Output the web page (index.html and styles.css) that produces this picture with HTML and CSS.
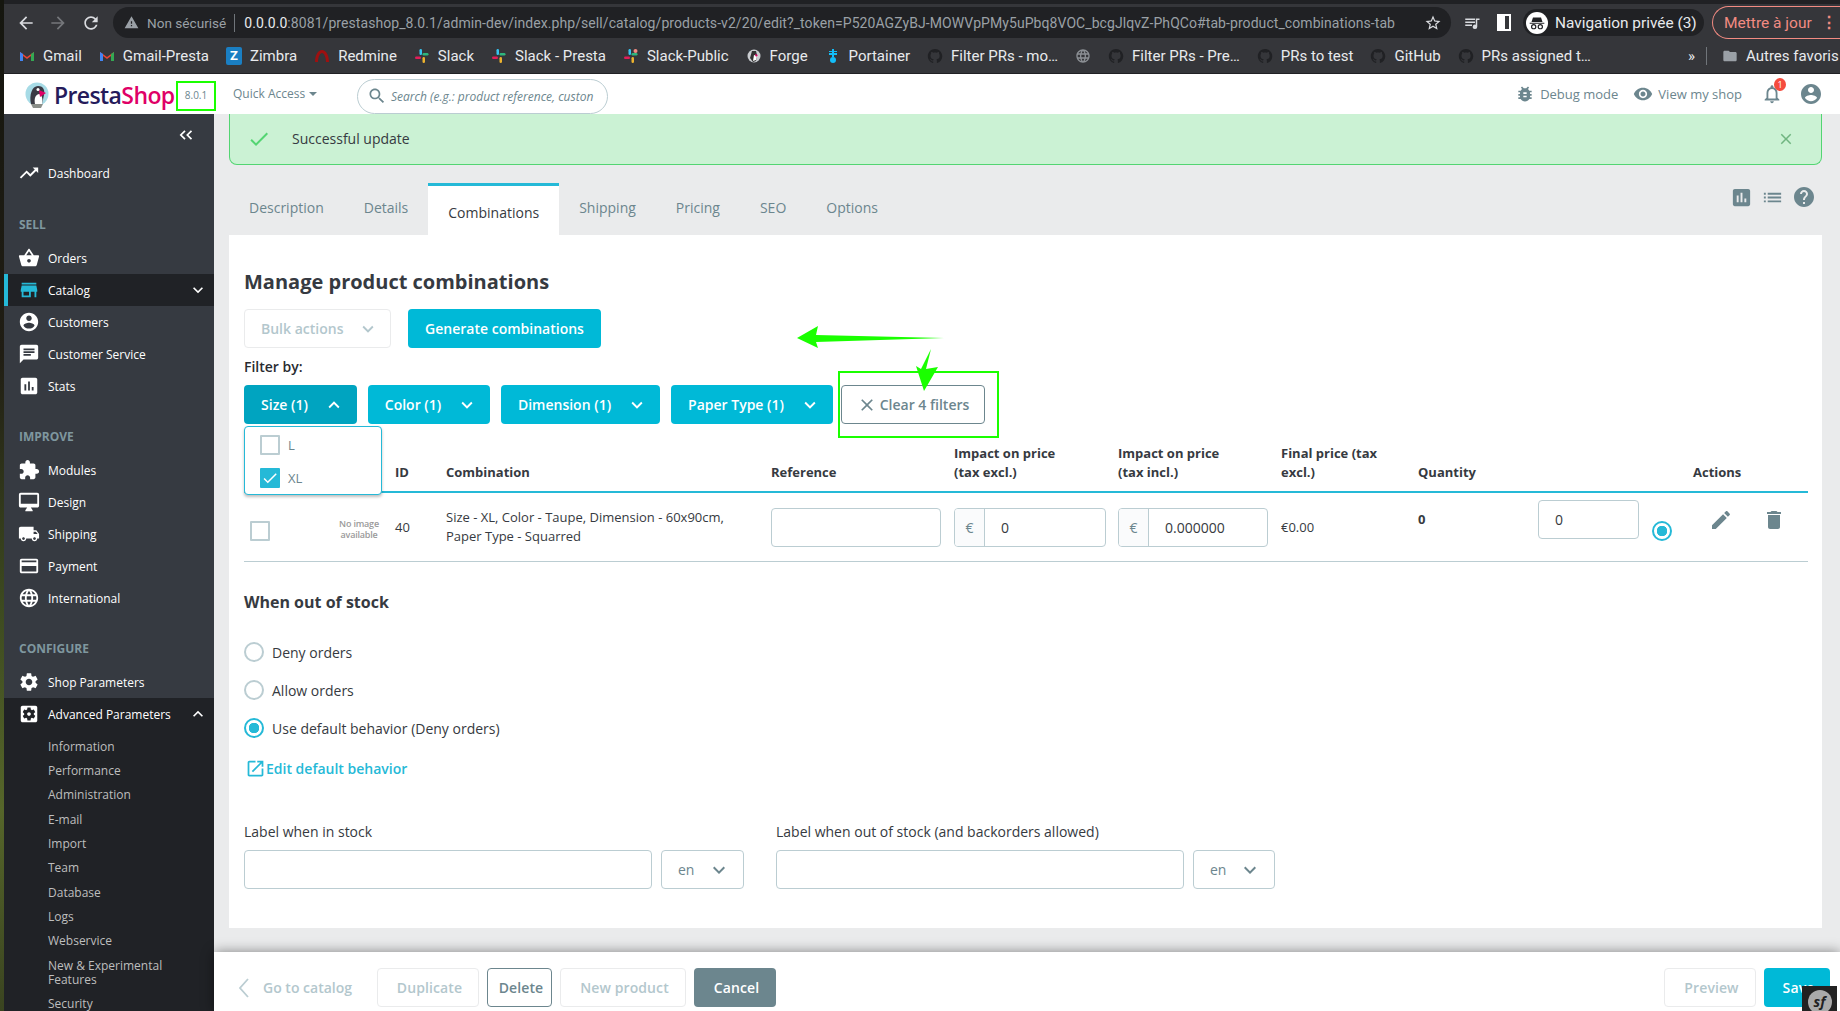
FILE: index.html
```html
<!DOCTYPE html>
<html lang="en">
<head>
<meta charset="utf-8">
<title>PrestaShop</title>
<link rel="stylesheet" href="styles.css">
</head>
<body>
<svg class="sprite" width="0" height="0">
<defs>
<symbol id="i-trend" viewBox="0 0 24 24"><path d="M16 6l2.29 2.29-4.88 4.88-4-4L2 16.59 3.41 18l6-6 4 4 6.3-6.29L22 12V6z"/></symbol>
<symbol id="i-basket" viewBox="0 0 24 24"><path d="M17.21 9l-4.38-6.56c-.19-.28-.51-.42-.83-.42-.32 0-.64.14-.83.43L6.79 9H2c-.55 0-1 .45-1 1 0 .09.01.18.04.27l2.54 9.27c.23.84 1 1.46 1.92 1.46h13c.92 0 1.69-.62 1.93-1.46l2.54-9.27L23 10c0-.55-.45-1-1-1h-4.79zM9 9l3-4.4L15 9H9zm3 8c-1.1 0-2-.9-2-2s.9-2 2-2 2 .9 2 2-.9 2-2 2z"/></symbol>
<symbol id="i-store" viewBox="0 0 24 24"><path d="M20 4H4v2h16V4zm1 10v-2l-1-5H4l-1 5v2h1v6h10v-6h4v6h2v-6h1zm-9 4H6v-4h6v4z"/></symbol>
<symbol id="i-account" viewBox="0 0 24 24"><path d="M12 2C6.48 2 2 6.48 2 12s4.48 10 10 10 10-4.48 10-10S17.52 2 12 2zm0 3c1.66 0 3 1.34 3 3s-1.34 3-3 3-3-1.34-3-3 1.34-3 3-3zm0 14.2c-2.5 0-4.71-1.28-6-3.22.03-1.99 4-3.08 6-3.08 1.99 0 5.97 1.09 6 3.08-1.29 1.94-3.5 3.22-6 3.22z"/></symbol>
<symbol id="i-chat" viewBox="0 0 24 24"><path d="M20 2H4c-1.1 0-1.99.9-1.99 2L2 22l4-4h14c1.1 0 2-.9 2-2V4c0-1.1-.9-2-2-2zM6 9h12v2H6V9zm8 5H6v-2h8v2zm4-6H6V6h12v2z"/></symbol>
<symbol id="i-stats" viewBox="0 0 24 24"><path d="M19 3H5c-1.1 0-2 .9-2 2v14c0 1.1.9 2 2 2h14c1.1 0 2-.9 2-2V5c0-1.1-.9-2-2-2zM9 17H7v-7h2v7zm4 0h-2V7h2v10zm4 0h-2v-4h2v4z"/></symbol>
<symbol id="i-ext" viewBox="0 0 24 24"><path d="M20.5 11H19V7c0-1.1-.9-2-2-2h-4V3.5C13 2.12 11.88 1 10.5 1S8 2.12 8 3.5V5H4c-1.1 0-1.99.9-1.99 2v3.8H3.5c1.49 0 2.7 1.21 2.7 2.7s-1.21 2.7-2.7 2.7H2V20c0 1.1.9 2 2 2h3.8v-1.5c0-1.49 1.21-2.7 2.7-2.7 1.49 0 2.7 1.21 2.7 2.7V22H17c1.1 0 2-.9 2-2v-4h1.5c1.38 0 2.5-1.12 2.5-2.5S21.88 11 20.5 11z"/></symbol>
<symbol id="i-desktop" viewBox="0 0 24 24"><path d="M21 2H3c-1.1 0-2 .9-2 2v12c0 1.1.9 2 2 2h7l-2 3v1h8v-1l-2-3h7c1.1 0 2-.9 2-2V4c0-1.1-.9-2-2-2zm0 12H3V4h18v10z"/></symbol>
<symbol id="i-truck" viewBox="0 0 24 24"><path d="M20 8h-3V4H3c-1.1 0-2 .9-2 2v11h2c0 1.66 1.34 3 3 3s3-1.34 3-3h6c0 1.66 1.34 3 3 3s3-1.34 3-3h2v-5l-3-4zM6 18.5c-.83 0-1.5-.67-1.5-1.5s.67-1.5 1.5-1.5 1.5.67 1.5 1.5-.67 1.5-1.5 1.5zm13.5-9l1.96 2.5H17V9.5h2.5zm-1.5 9c-.83 0-1.5-.67-1.5-1.5s.67-1.5 1.5-1.5 1.5.67 1.5 1.5-.67 1.5-1.5 1.5z"/></symbol>
<symbol id="i-card" viewBox="0 0 24 24"><path d="M20 4H4c-1.11 0-1.99.89-1.99 2L2 18c0 1.11.89 2 2 2h16c1.11 0 2-.89 2-2V6c0-1.11-.89-2-2-2zm0 14H4v-6h16v6zm0-10H4V6h16v2z"/></symbol>
<symbol id="i-globe" viewBox="0 0 24 24"><path d="M11.99 2C6.47 2 2 6.48 2 12s4.47 10 9.99 10C17.52 22 22 17.52 22 12S17.52 2 11.99 2zm6.93 6h-2.95c-.32-1.25-.78-2.45-1.38-3.56 1.84.63 3.37 1.91 4.33 3.56zM12 4.04c.83 1.2 1.48 2.53 1.91 3.96h-3.82c.43-1.43 1.08-2.76 1.91-3.96zM4.26 14C4.1 13.36 4 12.69 4 12s.1-1.36.26-2h3.38c-.08.66-.14 1.32-.14 2 0 .68.06 1.34.14 2H4.26zm.82 2h2.95c.32 1.25.78 2.45 1.38 3.56-1.84-.63-3.37-1.9-4.33-3.56zm2.95-8H5.08c.96-1.66 2.49-2.93 4.33-3.56C8.81 5.55 8.35 6.75 8.03 8zM12 19.96c-.83-1.2-1.48-2.53-1.91-3.96h3.82c-.43 1.43-1.08 2.76-1.91 3.96zM14.34 14H9.66c-.09-.66-.16-1.32-.16-2 0-.68.07-1.35.16-2h4.68c.09.65.16 1.32.16 2 0 .68-.07 1.34-.16 2zm.25 5.56c.6-1.11 1.06-2.31 1.38-3.56h2.95c-.96 1.65-2.49 2.93-4.33 3.56zM16.36 14c.08-.66.14-1.32.14-2 0-.68-.06-1.34-.14-2h3.38c.16.64.26 1.31.26 2s-.1 1.36-.26 2h-3.38z"/></symbol>
<symbol id="i-gear" viewBox="0 0 24 24"><path d="M19.14 12.94c.04-.3.06-.61.06-.94 0-.32-.02-.64-.07-.94l2.03-1.58c.18-.14.23-.41.12-.61l-1.92-3.32c-.12-.22-.37-.29-.59-.22l-2.39.96c-.5-.38-1.03-.7-1.62-.94l-.36-2.54c-.04-.24-.24-.41-.48-.41h-3.84c-.24 0-.43.17-.47.41l-.36 2.54c-.59.24-1.13.57-1.62.94l-2.39-.96c-.22-.08-.47 0-.59.22L2.74 8.87c-.12.21-.08.47.12.61l2.03 1.58c-.05.3-.09.63-.09.94s.02.64.07.94l-2.03 1.58c-.18.14-.23.41-.12.61l1.92 3.32c.12.22.37.29.59.22l2.39-.96c.5.38 1.03.7 1.62.94l.36 2.54c.05.24.24.41.48.41h3.84c.24 0 .44-.17.47-.41l.36-2.54c.59-.24 1.13-.56 1.62-.94l2.39.96c.22.08.47 0 .59-.22l1.92-3.32c.12-.22.07-.47-.12-.61l-2.01-1.58zM12 15.6c-1.98 0-3.6-1.62-3.6-3.6s1.62-3.6 3.6-3.6 3.6 1.62 3.6 3.6-1.62 3.6-3.6 3.6z"/></symbol>
<symbol id="i-gearbox" viewBox="0 0 24 24"><path d="M12 10c-1.1 0-2 .9-2 2s.9 2 2 2 2-.9 2-2-.9-2-2-2zm7-7H5c-1.11 0-2 .9-2 2v14c0 1.1.89 2 2 2h14c1.11 0 2-.9 2-2V5c0-1.1-.89-2-2-2zm-1.75 9c0 .23-.02.46-.05.68l1.48 1.16c.13.11.17.3.08.45l-1.4 2.42c-.09.15-.27.21-.43.15l-1.74-.7c-.36.28-.76.51-1.18.69l-.26 1.85c-.03.17-.18.3-.35.3h-2.8c-.17 0-.32-.13-.35-.29l-.26-1.85c-.43-.18-.82-.41-1.18-.69l-1.74.7c-.16.06-.34 0-.43-.15l-1.4-2.42c-.09-.15-.05-.34.08-.45l1.48-1.16c-.03-.23-.05-.46-.05-.69 0-.23.02-.46.05-.68l-1.48-1.16c-.13-.11-.17-.3-.08-.45l1.4-2.42c.09-.15.27-.21.43-.15l1.74.7c.36-.28.76-.51 1.18-.69l.26-1.85c.03-.17.18-.3.35-.3h2.8c.17 0 .32.13.35.29l.26 1.85c.43.18.82.41 1.18.69l1.74-.7c.16-.06.34 0 .43.15l1.4 2.42c.09.15.05.34-.08.45l-1.48 1.16c.03.23.05.46.05.69z"/></symbol>
<symbol id="i-bug" viewBox="0 0 24 24"><path d="M20 8h-2.81c-.45-.78-1.07-1.45-1.82-1.96L17 4.41 15.59 3l-2.17 2.17C12.96 5.06 12.49 5 12 5c-.49 0-.96.06-1.41.17L8.41 3 7 4.41l1.62 1.63C7.88 6.55 7.26 7.22 6.81 8H4v2h2.09c-.05.33-.09.66-.09 1v1H4v2h2v1c0 .34.04.67.09 1H4v2h2.81c1.04 1.79 2.97 3 5.19 3s4.15-1.21 5.19-3H20v-2h-2.09c.05-.33.09-.66.09-1v-1h2v-2h-2v-1c0-.34-.04-.67-.09-1H20V8zm-6 8h-4v-2h4v2zm0-4h-4v-2h4v2z"/></symbol>
<symbol id="i-eye" viewBox="0 0 24 24"><path d="M12 4.5C7 4.5 2.73 7.61 1 12c1.73 4.39 6 7.5 11 7.5s9.27-3.11 11-7.5c-1.73-4.39-6-7.5-11-7.5zM12 17c-2.76 0-5-2.24-5-5s2.24-5 5-5 5 2.24 5 5-2.24 5-5 5zm0-8c-1.66 0-3 1.34-3 3s1.34 3 3 3 3-1.34 3-3-1.34-3-3-3z"/></symbol>
<symbol id="i-bell" viewBox="0 0 24 24"><path d="M12 22c1.1 0 2-.9 2-2h-4c0 1.1.9 2 2 2zm6-6v-5c0-3.07-1.63-5.64-4.5-6.32V4c0-.83-.67-1.5-1.5-1.5s-1.5.67-1.5 1.5v.68C7.64 5.36 6 7.92 6 11v5l-2 2v1h16v-1l-2-2zm-2 1H8v-6c0-2.48 1.51-4.5 4-4.5s4 2.02 4 4.5v6z"/></symbol>
<symbol id="i-search" viewBox="0 0 24 24"><path d="M15.5 14h-.79l-.28-.27C15.41 12.59 16 11.11 16 9.5 16 5.91 13.09 3 9.5 3S3 5.91 3 9.5 5.91 16 9.5 16c1.61 0 3.09-.59 4.23-1.57l.27.28v.79l5 4.99L20.49 19l-4.99-5zm-6 0C7.01 14 5 11.99 5 9.5S7.01 5 9.5 5 14 7.01 14 9.5 11.99 14 9.5 14z"/></symbol>
<symbol id="i-edit" viewBox="0 0 24 24"><path d="M3 17.25V21h3.75L17.81 9.94l-3.75-3.75L3 17.25zM20.71 7.04c.39-.39.39-1.02 0-1.41l-2.34-2.34c-.39-.39-1.02-.39-1.41 0l-1.83 1.83 3.75 3.75 1.83-1.83z"/></symbol>
<symbol id="i-trash" viewBox="0 0 24 24"><path d="M6 19c0 1.1.9 2 2 2h8c1.1 0 2-.9 2-2V7H6v12zM19 4h-3.5l-1-1h-5l-1 1H5v2h14V4z"/></symbol>
<symbol id="i-help" viewBox="0 0 24 24"><path d="M12 2C6.48 2 2 6.48 2 12s4.48 10 10 10 10-4.48 10-10S17.52 2 12 2zm1 17h-2v-2h2v2zm2.07-7.75l-.9.92C13.45 12.9 13 13.5 13 15h-2v-.5c0-1.1.45-2.1 1.17-2.83l1.24-1.26c.37-.36.59-.86.59-1.41 0-1.1-.9-2-2-2s-2 .9-2 2H8c0-2.21 1.79-4 4-4s4 1.79 4 4c0 .88-.36 1.68-.93 2.25z"/></symbol>
<symbol id="i-list" viewBox="0 0 24 24"><path d="M3 13h2v-2H3v2zm0 4h2v-2H3v2zm0-8h2V7H3v2zm4 4h14v-2H7v2zm0 4h14v-2H7v2zM7 7v2h14V7H7z"/></symbol>
<symbol id="i-open" viewBox="0 0 24 24"><path d="M19 19H5V5h7V3H5c-1.11 0-2 .9-2 2v14c0 1.1.89 2 2 2h14c1.1 0 2-.9 2-2v-7h-2v7zM14 3v2h3.59l-9.83 9.83 1.41 1.41L19 6.41V10h2V3h-7z"/></symbol>
<symbol id="i-close" viewBox="0 0 24 24"><path d="M19 6.41L17.59 5 12 10.59 6.41 5 5 6.41 10.59 12 5 17.59 6.41 19 12 13.41 17.59 19 19 17.59 13.41 12z"/></symbol>
<symbol id="i-check" viewBox="0 0 24 24"><path d="M9 16.17L4.83 12l-1.42 1.41L9 19 21 7l-1.41-1.41z"/></symbol>
<symbol id="i-down" viewBox="0 0 24 24"><path d="M7.41 8.59L12 13.17l4.59-4.58L18 10l-6 6-6-6z"/></symbol>
<symbol id="i-up" viewBox="0 0 24 24"><path d="M7.41 15.41L12 10.83l4.59 4.58L18 14l-6-6-6 6z"/></symbol>
<symbol id="i-hub" viewBox="0 0 24 24"><path d="M12 1.5C6 1.5 1.2 6.3 1.2 12.3c0 4.8 3.1 8.8 7.4 10.2.5.1.7-.2.7-.5v-1.9c-3 .7-3.6-1.3-3.6-1.3-.5-1.2-1.2-1.6-1.2-1.6-1-.7.1-.7.1-.7 1.1.1 1.7 1.1 1.7 1.1 1 1.7 2.5 1.2 3.1.9.1-.7.4-1.2.7-1.5-2.4-.3-4.9-1.2-4.9-5.3 0-1.2.4-2.1 1.1-2.9-.1-.3-.5-1.4.1-2.8 0 0 .9-.3 3 1.1.9-.2 1.8-.4 2.7-.4s1.8.1 2.7.4c2.1-1.4 3-1.1 3-1.1.6 1.5.2 2.6.1 2.8.7.8 1.1 1.7 1.1 2.9 0 4.1-2.5 5-4.9 5.3.4.3.7 1 .7 2V22c0 .3.2.6.7.5 4.3-1.4 7.4-5.4 7.4-10.2C22.8 6.3 18 1.5 12 1.5z"/></symbol>
</defs>
</svg>

<div class="window">
  <div class="tabstrip"></div>
  <div class="toolbar">
    <svg class="tb-ic tb-back" viewBox="0 0 24 24"><path d="M20 11H7.83l5.59-5.59L12 4l-8 8 8 8 1.41-1.41L7.83 13H20z"/></svg>
    <svg class="tb-ic tb-fwd" viewBox="0 0 24 24"><path d="M12 4l-1.41 1.41L16.17 11H4v2h12.17l-5.58 5.59L12 20l8-8z"/></svg>
    <svg class="tb-ic tb-rel" viewBox="0 0 24 24"><path d="M17.65 6.35C16.2 4.9 14.21 4 12 4c-4.42 0-7.99 3.58-7.99 8s3.57 8 7.99 8c3.73 0 6.84-2.55 7.73-6h-2.08c-.82 2.33-3.04 4-5.65 4-3.31 0-6-2.69-6-6s2.69-6 6-6c1.66 0 3.14.69 4.22 1.78L13 11h7V4l-2.35 2.35z"/></svg>
    <div class="omnibox">
      <svg class="warn" viewBox="0 0 24 24"><path d="M1 21h22L12 2 1 21zm12-3h-2v-2h2v2zm0-4h-2v-4h2v4z"/></svg>
      <span class="insecure">Non sécurisé</span><span class="sep"></span>
      <span class="url"><b>0.0.0.0</b>:8081/prestashop_8.0.1/admin-dev/index.php/sell/catalog/products-v2/20/edit?_token=P520AGZyBJ-MOWVpPMy5uPbq8VOC_bcgJlqvZ-PhQCo#tab-product_combinations-tab</span>
      <svg class="star" viewBox="0 0 24 24"><path d="M22 9.24l-7.19-.62L12 2 9.19 8.63 2 9.24l5.46 4.73L5.82 21 12 17.27 18.18 21l-1.63-7.03L22 9.24zM12 15.4l-3.76 2.27 1-4.28-3.32-2.88 4.38-.38L12 6.1l1.71 4.04 4.38.38-3.32 2.88 1 4.28L12 15.4z"/></svg>
    </div>
    <svg class="tb-ic tb-media" viewBox="0 0 24 24"><path d="M3 6h13v2H3zm0 4h13v2H3zm0 4h9v2H3zm14-8h5v2h-3v9a3 3 0 1 1-2-2.8z"/></svg>
    <span class="panel-ic"></span>
    <div class="incog">
      <svg class="incog-ic" viewBox="0 0 24 24"><circle cx="12" cy="12" r="12" fill="#fff"/><path d="M6 11l1.6-5h8.8l1.6 5zM4 11.6h16v1.2H4z" fill="#202124"/><circle cx="8.4" cy="16" r="2.3" fill="none" stroke="#202124" stroke-width="1.3"/><circle cx="15.6" cy="16" r="2.3" fill="none" stroke="#202124" stroke-width="1.3"/></svg>
      <span>Navigation privée (3)</span>
    </div>
    <div class="update"><span>Mettre à jour</span><span class="dots">⋮</span></div>
  </div>
  <div class="bookmarks">
    <span class="bm"><svg class="bm-ic" viewBox="0 0 16 16"><path d="M1 13V4l7 5 7-5v9h-3V8l-4 3-4-3v5z" fill="#ea4335"/><path d="M1 13V4l3 2v7z" fill="#4285f4"/><path d="M15 13V4l-3 2v7z" fill="#34a853"/></svg>Gmail</span>
    <span class="bm"><svg class="bm-ic" viewBox="0 0 16 16"><path d="M1 13V4l7 5 7-5v9h-3V8l-4 3-4-3v5z" fill="#ea4335"/><path d="M1 13V4l3 2v7z" fill="#4285f4"/><path d="M15 13V4l-3 2v7z" fill="#34a853"/></svg>Gmail-Presta</span>
    <span class="bm"><span class="zim">Z</span>Zimbra</span>
    <span class="bm"><svg class="bm-ic" viewBox="0 0 16 16"><path d="M1 14C1 7 4 2 8 2s7 5 7 12h-3c0-5-2-9-4-9s-4 4-4 9z" fill="#9d1010"/></svg>Redmine</span>
    <span class="bm"><svg class="bm-ic" viewBox="0 0 16 16"><rect x="5.5" y="1" width="2.5" height="6" rx="1.2" fill="#36c5f0"/><rect x="1" y="8.5" width="6" height="2.5" rx="1.2" fill="#e01e5a"/><rect x="8.5" y="5" width="6" height="2.5" rx="1.2" fill="#2eb67d"/><rect x="8.5" y="9" width="2.5" height="6" rx="1.2" fill="#ecb22e"/></svg>Slack</span>
    <span class="bm"><svg class="bm-ic" viewBox="0 0 16 16"><rect x="5.5" y="1" width="2.5" height="6" rx="1.2" fill="#36c5f0"/><rect x="1" y="8.5" width="6" height="2.5" rx="1.2" fill="#e01e5a"/><rect x="8.5" y="5" width="6" height="2.5" rx="1.2" fill="#2eb67d"/><rect x="8.5" y="9" width="2.5" height="6" rx="1.2" fill="#ecb22e"/></svg>Slack - Presta</span>
    <span class="bm"><svg class="bm-ic" viewBox="0 0 16 16"><rect x="5.5" y="1" width="2.5" height="6" rx="1.2" fill="#36c5f0"/><rect x="1" y="8.5" width="6" height="2.5" rx="1.2" fill="#e01e5a"/><rect x="8.5" y="5" width="6" height="2.5" rx="1.2" fill="#2eb67d"/><rect x="8.5" y="9" width="2.5" height="6" rx="1.2" fill="#ecb22e"/><circle cx="12.5" cy="3" r="2" fill="#f28b82"/></svg>Slack-Public</span>
    <span class="bm"><svg class="bm-ic" viewBox="0 0 16 16"><circle cx="8" cy="8" r="6.5" fill="#c9ccd0"/><path d="M6 3h4l1 4-1 6-3 1-3-4z" fill="#333"/><path d="M8 7l3 1-1 4-3 1z" fill="#fff"/><path d="M9 6l3 1-2 2z" fill="#df0067"/></svg>Forge</span>
    <span class="bm"><svg class="bm-ic" viewBox="0 0 16 16"><path d="M7 1h2v8H7zM4 3h8v1H4zM4 5h3v2H4zM9 5h3v2H9z" fill="#13bef9"/><circle cx="8" cy="12" r="3" fill="#13bef9"/></svg>Portainer</span>
    <span class="bm"><svg class="bm-ic"><use href="#i-hub"/></svg>Filter PRs - mo…</span>
    <span class="bm bm-globe"><svg class="bm-ic globe-ic"><use href="#i-globe"/></svg></span>
    <span class="bm"><svg class="bm-ic"><use href="#i-hub"/></svg>Filter PRs - Pre…</span>
    <span class="bm"><svg class="bm-ic"><use href="#i-hub"/></svg>PRs to test</span>
    <span class="bm"><svg class="bm-ic"><use href="#i-hub"/></svg>GitHub</span>
    <span class="bm"><svg class="bm-ic"><use href="#i-hub"/></svg>PRs assigned t…</span>
    <span class="bm-more">»</span><span class="bm-sep"></span>
    <span class="bm bm-folder"><svg class="bm-ic folder-ic" viewBox="0 0 24 24"><path d="M10 4H4c-1.1 0-2 .9-2 2v12c0 1.1.9 2 2 2h16c1.1 0 2-.9 2-2V8c0-1.1-.9-2-2-2h-8z"/></svg>Autres favoris</span>
  </div>

  <header class="adm-head">
    <div class="logo">
      <svg class="puffin" viewBox="0 0 24 28"><circle cx="12" cy="13" r="11.5" fill="#a7dbe6"/><path d="M6 23C4 14 7 5 13 5s7 5 6 9l-2 9z" fill="#3a3a44"/><path d="M10 23c-1-5 0-9 4-10 3 1 4 5 3 10z" fill="#fff"/><path d="M14 9l7 3-6 4z" fill="#df0067"/><circle cx="13" cy="8.500" r="1.500" fill="#fff"/><path d="M6 23h12l-2 4H8z" fill="#8b8f8a"/></svg>
      <span class="logo-txt"><span class="logo-a">Presta</span><span class="logo-b">Shop</span></span>
    </div>
    <span class="version">8.0.1</span>
    <span class="quick">Quick Access <i class="caret"></i></span>
    <div class="search"><svg class="search-ic"><use href="#i-search"/></svg><span class="search-txt">Search (e.g.: product reference, custon</span></div>
    <div class="head-right">
      <span class="hl hl-debug"><svg><use href="#i-bug"/></svg>Debug mode</span>
      <span class="hl hl-view"><svg><use href="#i-eye"/></svg>View my shop</span>
      <span class="bell"><svg><use href="#i-bell"/></svg><b class="badge">1</b></span>
      <svg class="user"><use href="#i-account"/></svg>
    </div>
  </header>

  <div class="main">
    <nav class="side">
      <div class="collapse"><svg viewBox="0 0 14 10"><path d="M6 .8L1.800 5 6 9.200M12.500 .8L8.300 5l4.200 4.200" fill="none" stroke="#fff" stroke-width="1.700"/></svg></div>
      <a class="nav"><svg><use href="#i-trend"/></svg>Dashboard</a>
      <div class="nav-title first">SELL</div>
      <a class="nav"><svg><use href="#i-basket"/></svg>Orders</a>
      <a class="nav active"><svg><use href="#i-store"/></svg>Catalog<svg class="chev"><use href="#i-down"/></svg></a>
      <a class="nav"><svg><use href="#i-account"/></svg>Customers</a>
      <a class="nav"><svg><use href="#i-chat"/></svg>Customer Service</a>
      <a class="nav"><svg><use href="#i-stats"/></svg>Stats</a>
      <div class="nav-title">IMPROVE</div>
      <a class="nav"><svg><use href="#i-ext"/></svg>Modules</a>
      <a class="nav"><svg><use href="#i-desktop"/></svg>Design</a>
      <a class="nav"><svg><use href="#i-truck"/></svg>Shipping</a>
      <a class="nav"><svg><use href="#i-card"/></svg>Payment</a>
      <a class="nav"><svg><use href="#i-globe"/></svg>International</a>
      <div class="nav-title">CONFIGURE</div>
      <a class="nav"><svg><use href="#i-gear"/></svg>Shop Parameters</a>
      <div class="nav-open">
        <a class="nav"><svg><use href="#i-gearbox"/></svg>Advanced Parameters<svg class="chev"><use href="#i-up"/></svg></a>
        <ul class="sub">
          <li>Information</li><li>Performance</li><li>Administration</li><li>E-mail</li><li>Import</li><li>Team</li><li>Database</li><li>Logs</li><li>Webservice</li><li>New &amp; Experimental Features</li><li>Security</li>
        </ul>
      </div>
    </nav>

    <div class="content">
      <div class="scroll">
        <div class="alert">
          <svg class="al-check"><use href="#i-check"/></svg>
          <span class="al-txt">Successful update</span>
          <svg class="al-close"><use href="#i-close"/></svg>
        </div>
        <div class="tabs">
          <span class="tab">Description</span>
          <span class="tab">Details</span>
          <span class="tab on">Combinations</span>
          <span class="tab">Shipping</span>
          <span class="tab">Pricing</span>
          <span class="tab">SEO</span>
          <span class="tab">Options</span>
          <div class="tab-tools">
            <svg><use href="#i-stats"/></svg>
            <svg><use href="#i-list"/></svg>
            <svg class="tool-help"><use href="#i-help"/></svg>
          </div>
        </div>
        <section class="card">
          <h2 class="title">Manage product combinations</h2>
          <div class="actions">
            <span class="btn btn-bulk">Bulk actions<svg><use href="#i-down"/></svg></span>
            <span class="btn btn-pri btn-gen">Generate combinations</span>
          </div>
          <div class="filter-lbl">Filter by:</div>
          <div class="filters">
            <span class="btn btn-pri f-open f1">Size (1)<svg><use href="#i-up"/></svg></span>
            <span class="btn btn-pri f2">Color (1)<svg><use href="#i-down"/></svg></span>
            <span class="btn btn-pri f3">Dimension (1)<svg><use href="#i-down"/></svg></span>
            <span class="btn btn-pri f4">Paper Type (1)<svg><use href="#i-down"/></svg></span>
            <span class="btn btn-clear"><svg><use href="#i-close"/></svg>Clear 4 filters</span>
            <div class="drop">
              <label class="drop-row"><span class="cb"></span>L</label>
              <label class="drop-row"><span class="cb cb-on"><svg><use href="#i-check"/></svg></span>XL</label>
            </div>
          </div>
          <div class="grid head">
            <span></span><span></span>
            <span>ID</span>
            <span>Combination</span>
            <span>Reference</span>
            <span>Impact on price<br>(tax excl.)</span>
            <span>Impact on price<br>(tax incl.)</span>
            <span>Final price (tax<br>excl.)</span>
            <span>Quantity</span>
            <span></span><span></span>
            <span>Actions</span>
          </div>
          <div class="grid row">
            <span class="cell"><span class="cb cb-row"></span></span>
            <span class="cell"><span class="noimg">No image<br>available</span></span>
            <span class="cell mid">40</span>
            <span class="cell mid combo">Size - XL, Color - Taupe, Dimension - 60x90cm,<br>Paper Type - Squarred</span>
            <span class="cell"><span class="inp inp-ref"></span></span>
            <span class="cell"><span class="inp inp-g w1"><i>€</i><em>0</em></span></span>
            <span class="cell"><span class="inp inp-g w2"><i>€</i><em>0.000000</em></span></span>
            <span class="cell mid">€0.00</span>
            <span class="cell qty">0</span>
            <span class="cell"><span class="inp inp-qty">0</span></span>
            <span class="cell"><span class="radio on r-row"></span></span>
            <span class="cell acts"><svg><use href="#i-edit"/></svg><svg><use href="#i-trash"/></svg></span>
          </div>
          <h3 class="sub-title">When out of stock</h3>
          <div class="opts">
            <div class="opt"><span class="radio"></span>Deny orders</div>
            <div class="opt"><span class="radio"></span>Allow orders</div>
            <div class="opt"><span class="radio on"></span>Use default behavior (Deny orders)</div>
          </div>
          <a class="edit-link"><svg><use href="#i-open"/></svg>Edit default behavior</a>
          <div class="labels">
            <div class="lab-col">
              <div class="lab">Label when in stock</div>
              <div class="lab-ctl"><span class="inp inp-lab"></span><span class="inp lang">en<svg><use href="#i-down"/></svg></span></div>
            </div>
            <div class="lab-col">
              <div class="lab">Label when out of stock (and backorders allowed)</div>
              <div class="lab-ctl"><span class="inp inp-lab"></span><span class="inp lang lang2">en<svg><use href="#i-down"/></svg></span></div>
            </div>
          </div>
        </section>
      </div>
      <footer class="foot">
        <span class="back"><svg viewBox="0 0 12 24"><path d="M10 3L2 12l8 9" fill="none" stroke="#bbcdd2" stroke-width="1.800"/></svg>Go to catalog</span>
        <span class="btn b-off b-dup">Duplicate</span>
        <span class="btn b-del">Delete</span>
        <span class="btn b-off b-new">New product</span>
        <span class="btn b-can">Cancel</span>
        <span class="foot-right">
          <span class="btn b-off b-pre">Preview</span>
          <span class="btn btn-pri b-save">Save</span>
        </span>
      </footer>
    </div>
  </div>
</div>

<div class="sf"><span class="sf-logo">sf</span></div>
<div class="mark mark-ver"></div>
<div class="mark mark-clear"></div>
<svg class="arrows" viewBox="0 0 1840 1011"><polygon points="797,338 818,326 816,335 944,338 816,342 818,348" fill="#1aff00"/><polygon points="931,349 926,369 938,367 924,391 916,366 921,369" fill="#1aff00"/></svg>
</body>
</html>
```
FILE: styles.css
```css
* { box-sizing: border-box; }
html, body { margin: 0; height: 1011px; overflow: hidden; }
body {
  font-family: "Open Sans", "Noto Sans", sans-serif;
  color: #363a41;
  background: linear-gradient(#15160f 0, #201d14 35%, #3d4a20 60%, #56662a 80%, #3a4420 100%);
}
.sprite { position: absolute; }
.window { margin-left: 4px; width: 1836px; height: 1011px; display: flex; flex-direction: column; overflow: hidden; }

/* browser chrome */
.tabstrip { height: 4px; background: #202124; margin-left: -4px; flex: none; }
.toolbar { height: 39px; background: #35363a; display: flex; align-items: center; flex: none; font-family: Roboto, sans-serif; color: #e8eaed; font-size: 14px; padding-bottom: 2px; }
.tb-ic { width: 20px; height: 20px; fill: #dadce0; flex: none; }
.tb-back { margin-left: 12px; }
.tb-fwd { margin-left: 12px; fill: #75777b; }
.tb-rel { margin-left: 13px; }
.omnibox { margin-left: 12px; width: 1338px; height: 31px; background: #202124; border-radius: 16px; display: flex; align-items: center; padding-left: 11px; flex: none; }
.warn { width: 15px; height: 15px; fill: #9aa0a6; flex: none; }
.insecure { margin-left: 8px; color: #9aa0a6; font-size: 13.600px; }
.sep { width: 1px; height: 18px; background: #70757a; margin: 0 9px 0 8px; }
.url { color: #9aa0a6; white-space: nowrap; font-size: 14px; letter-spacing: .07px; }
.url b { color: #e8eaed; font-weight: 400; }
.star { width: 18px; height: 18px; fill: #dadce0; margin-left: auto; margin-right: 9px; flex: none; }
.tb-media { margin-left: 12px; width: 18px; height: 18px; }
.panel-ic { width: 14px; height: 17px; border: 2px solid #fff; border-left-width: 8px; margin-left: 16px; flex: none; }
.incog { margin-left: 12px; width: 181px; height: 27px; border-radius: 14px; background: #202124; display: flex; align-items: center; gap: 7px; padding-left: 3px; flex: none; font-size: 15.400px; }
.incog-ic { width: 22px; height: 22px; flex: none; }
.update { margin-left: 8px; width: 130px; height: 33px; border: 1px solid #f28b82; border-right: none; border-radius: 17px 0 0 17px; display: flex; align-items: center; padding-left: 11px; color: #f28b82; font-size: 15.500px; flex: none; white-space: nowrap; }
.dots { margin-left: 9px; font-size: 16px; font-weight: 700; }

.bookmarks { height: 31px; background: #35363a; border-bottom: 1px solid #202124; display: flex; align-items: center; padding: 0 0 5px 15px; gap: 17px; flex: none; font-family: Roboto, sans-serif; color: #e8eaed; font-size: 15px; white-space: nowrap; }
.bm { display: flex; align-items: center; gap: 8px; }
.bm-ic { width: 16px; height: 16px; fill: #202124; flex: none; }
.globe-ic { fill: #8c9095; }
.folder-ic { fill: #9aa0a6; }
.zim { width: 16px; height: 18px; background: #1a7fc3; color: #fff; border-radius: 2px; font-weight: 700; font-size: 13px; text-align: center; line-height: 18px; }
.bm-more { margin-left: auto; font-size: 15px; margin-right: -6px; }
.bm-sep { width: 1px; height: 18px; background: #70757a; margin-right: -2px; }
.bm-folder { flex: none; width: 118px; overflow: hidden; }

/* header */
.adm-head { height: 40px; background: #fff; display: flex; align-items: center; flex: none; padding-left: 21px; }
.logo { display: flex; align-items: center; gap: 5px; width: 151px; margin-top: 1px; }
.puffin { width: 24px; height: 28px; flex: none; }
.logo-txt { font-size: 23px; font-weight: 600; letter-spacing: -.6px; line-height: 24px; }
.logo-a { color: #251b5b; }
.logo-b { color: #df0067; }
.version { width: 40px; text-align: center; font-size: 10px; color: #6c868e; margin-top: 1px; }
.quick { margin-left: 17px; font-size: 12px; color: #6c868e; margin-top: -1px; width: 124px; }
.caret { display: inline-block; border: 4px solid transparent; border-top-color: #6c868e; border-bottom: 0; vertical-align: 2px; margin-left: 1px; }
.search { width: 251px; height: 35px; border: 1px solid #bbcdd2; border-radius: 17.500px; display: flex; align-items: center; padding-left: 9px; gap: 4px; overflow: hidden; flex: none; margin-top: 4px; }
.search-ic { width: 20px; height: 20px; fill: #6c868e; flex: none; }
.search-txt { font-size: 12px; font-style: italic; color: #6c868e; white-space: nowrap; }
.head-right { margin-left: auto; display: flex; align-items: center; font-size: 13px; color: #6c868e; margin-top: -1px; }
.hl { display: flex; align-items: center; gap: 5px; }
.hl svg { width: 20px; height: 20px; fill: #6c868e; }
.hl-view { margin-left: 15px; }
.bell { margin-left: 19px; position: relative; width: 22px; height: 22px; }
.bell svg { width: 22px; height: 22px; fill: #6c868e; }
.badge { position: absolute; right: -3px; top: -5px; width: 12px; height: 13px; border-radius: 50%; background: #f54c3e; color: #fff; font-size: 9px; font-weight: 400; text-align: center; line-height: 13px; }
.user { width: 24px; height: 24px; fill: #6c868e; margin: 0 17px 0 16px; }

.main { flex: 1; display: flex; min-height: 0; }

/* sidebar */
.side { width: 210px; flex: none; background: #363a41; color: #fff; font-size: 12px; display: flex; flex-direction: column; overflow: hidden; }
.collapse { height: 43px; padding: 16px 0 0 175px; flex: none; }
.collapse svg { width: 14px; height: 10px; display: block; }
.nav { height: 32px; display: flex; align-items: center; padding-left: 14px; gap: 8px; color: #fff; flex: none; position: relative; }
.nav > svg { width: 22px; height: 22px; fill: #fff; flex: none; }
.nav .chev { position: absolute; right: 6px; top: 6px; width: 20px; height: 20px; }
.nav.active { background: #202226; border-left: 4px solid #25b9d7; padding-left: 10px; }
.nav.active > svg:first-child { fill: #25b9d7; }
.nav-title { height: 52px; padding-top: 25px; line-height: 20px; padding-left: 15px; font-weight: 700; font-size: 12px; color: #7f979f; flex: none; }
.nav-title.first { height: 53px; padding-top: 26px; }
.nav-open { background: #202226; flex: 1; }
.sub { list-style: none; margin: 0; padding: 4.500px 24px 0 44px; color: #bebebe; }
.sub li { padding: 5px 0; line-height: 14.350px; }

/* content */
.content { flex: 1; min-width: 0; display: flex; flex-direction: column; }
.scroll { flex: 1; min-height: 0; background: #eaebec; padding: 0 18px 0 15px; overflow: hidden; }
.alert { height: 51px; background: #cbf2d4; border: 1px solid #53d572; border-top: 0; border-radius: 0 0 8px 8px; display: flex; align-items: center; padding: 0 26px 0 17px; }
.al-check { width: 24px; height: 24px; fill: #53d572; flex: none; }
.al-txt { margin-left: 21px; font-size: 14px; color: #363a41; margin-top: -1px; }
.al-close { margin-left: auto; width: 18px; height: 18px; fill: #70b580; }
.tabs { margin-top: 18px; height: 52px; display: flex; align-items: stretch; font-size: 14px; color: #6c868e; position: relative; }
.tab { padding: 0 20px 3px; display: flex; align-items: center; }
.tab.on { background: #fff; border-top: 3px solid #25b9d7; color: #363a41; padding: 3px 20px 0; }
.tab-tools { margin-left: auto; display: flex; gap: 8px; padding: 3px 6px 0 0; align-items: flex-start; }
.tab-tools svg { width: 23px; height: 23px; fill: #6c868e; }
.tab-tools .tool-help { width: 24px; height: 24px; margin-top: -1px; }

.card { background: #fff; padding: 33px 14px 39px 15px; }
.title { margin: 0 0 13px; font-size: 20px; line-height: 28px; font-weight: 700; color: #363a41; }
.actions { display: flex; gap: 17px; }
.btn { height: 39px; display: inline-flex; align-items: center; justify-content: center; border-radius: 4px; font-size: 14px; font-weight: 600; white-space: nowrap; flex: none; }
.btn svg { width: 22px; height: 22px; flex: none; }
.btn-pri { background: #00b9d7; color: #fff; }
.btn-pri svg { fill: #fff; }
.btn-bulk { width: 147px; border: 1px solid #eaebec; color: #b3c7cd; justify-content: flex-start; padding-left: 16px; gap: 14px; }
.btn-bulk svg { fill: #b3c7cd; }
.btn-gen { width: 193px; }
.filter-lbl { margin-top: 9px; height: 20px; line-height: 20px; font-size: 14px; font-weight: 600; color: #282b30; }
.filters { margin-top: 8px; display: flex; gap: 11px; position: relative; }
.filters .btn-pri { gap: 15px; padding-left: 5px; }
.f1 { width: 113px; }
.filters .f1 { background: #00a4c0; }
.f2 { width: 122px; }
.f3 { width: 159px; }
.f4 { width: 162px; }
.btn-clear { margin-left: -3px; width: 144px; border: 1px solid #6c868e; color: #6c868e; gap: 3px; }
.btn-clear svg { fill: #6c868e; width: 20px; height: 20px; }
.drop { position: absolute; left: 0; top: 41px; width: 138px; height: 69px; background: #fff; border: 1px solid #25b9d7; border-radius: 4px; box-shadow: 0 2px 3px rgba(0,0,0,.25); padding: 8px 0 0 15px; z-index: 2; }
.drop-row { display: flex; align-items: center; gap: 8px; height: 20px; margin-bottom: 13px; font-size: 13px; color: #6c868e; }
.cb { width: 20px; height: 20px; border: 2px solid #bbcdd2; border-radius: 1px; display: inline-block; flex: none; background: #fff; }
.cb-on { background: #25b9d7; border-color: #25b9d7; }
.cb-on svg { width: 18px; height: 18px; fill: #fff; display: block; margin: -1px 0 0 -1px; }

.grid { display: grid; grid-template-columns: 96px 55px 51px 325px 183px 164px 163px 137px 120px 114px 41px 115px; }
.head { margin-top: 17px; height: 52px; border-bottom: 2px solid #25b9d7; font-size: 13px; font-weight: 700; line-height: 19px; align-items: end; padding-bottom: 9px; }
.row { height: 69px; border-bottom: 1px solid #bbcdd2; font-size: 13px; line-height: 19px; }
.cell { display: block; }
.mid { align-self: center; }
.cb-row { margin: 28px 0 0 6px; }
.noimg { display: block; margin-top: 25px; font-size: 9px; line-height: 11px; color: #9a9a9a; text-align: center; width: 42px; margin-left: -2px; font-weight: 600; letter-spacing: -.2px; }
.inp { display: block; height: 39px; border: 1px solid #bbcdd2; border-radius: 4px; background: #fff; font-size: 14px; color: #363a41; }
.inp-ref { margin-top: 15px; width: 170px; }
.inp-g { margin-top: 15px; display: flex; overflow: hidden; }
.inp-g i { width: 30px; background: #fafbfc; border-right: 1px solid #bbcdd2; font-style: normal; color: #6c868e; text-align: center; line-height: 37px; flex: none; }
.inp-g em { font-style: normal; padding-left: 16px; line-height: 37px; }
.w1 { width: 152px; }
.w2 { width: 150px; }
.qty { margin-top: 17px; font-weight: 700; }
.inp-qty { margin-top: 7px; width: 101px; padding-left: 16px; line-height: 37px; }
.radio { width: 20px; height: 20px; border: 2px solid #bbcdd2; border-radius: 50%; display: inline-block; background: #fff; flex: none; position: relative; }
.radio.on { border: 2px solid #25b9d7; background: radial-gradient(circle, #25b9d7 0 5px, #fff 5.500px); }
.r-row { margin-top: 28px; }
.acts { display: flex; gap: 29px; padding: 15px 0 0 16px; align-items: flex-start; }
.acts svg { width: 24px; height: 24px; fill: #6c868e; flex: none; }
.sub-title { margin: 28px 0 0; font-size: 16px; font-weight: 700; line-height: 24px; }
.opts { margin-top: 19px; }
.opt { height: 38px; display: flex; align-items: center; gap: 8px; font-size: 14px; }
.edit-link { margin-top: 11px; height: 20px; display: flex; align-items: center; color: #25b9d7; font-size: 14px; font-weight: 600; margin-left: 1px; }
.edit-link svg { width: 21px; height: 21px; fill: #25b9d7; flex: none; }
.labels { margin-top: 44px; display: flex; gap: 32px; }
.lab { font-size: 14px; height: 20px; line-height: 20px; margin-bottom: 8px; }
.lab-ctl { display: flex; gap: 9px; }
.inp-lab { width: 408px; }
.lang { width: 83px; display: flex; align-items: center; justify-content: space-between; padding: 0 12px 0 16px; color: #6c868e; }
.lang2 { width: 82px; }
.lang svg { width: 24px; height: 24px; fill: #6c868e; }

/* footer */
.foot { height: 59px; flex: none; background: #fff; position: relative; box-shadow: 0 0 12px rgba(0,0,0,.45); display: flex; align-items: flex-start; padding: 16px 10px 0 24px; }
.back { height: 39px; display: flex; align-items: center; gap: 13px; color: #b3c7cd; font-size: 14px; font-weight: 600; width: 139px; flex: none; }
.back svg { width: 12px; height: 24px; flex: none; }
.foot .btn { letter-spacing: .1px; padding-left: 3px; }
.foot .btn + .btn { margin-left: 8px; }
.b-off { border: 1px solid #eaebec; color: #b3c7cd; }
.b-dup { width: 102px; }
.b-del { width: 65px; border: 1px solid #6c868e; color: #6c868e; }
.b-new { width: 126px; }
.b-can { width: 82px; background: #6c868e; color: #fff; }
.foot-right { margin-left: auto; display: flex; }
.b-pre { width: 92px; }
.b-save { width: 66px; margin-left: 8px; }

/* overlays */
.sf { position: absolute; right: 3px; bottom: 0; width: 35px; height: 25px; background: #222; display: flex; align-items: flex-end; justify-content: center; overflow: hidden; }
.sf-logo { width: 24px; height: 24px; border-radius: 50%; background: #aaa; color: #222; font-size: 14px; font-style: italic; font-weight: 700; text-align: center; line-height: 24px; margin-bottom: -3px; }
.mark { position: absolute; border: 2px solid #1aff00; }
.mark-ver { left: 176px; top: 81px; width: 40px; height: 30px; }
.mark-clear { left: 838px; top: 371px; width: 161px; height: 67px; }
.arrows { position: absolute; left: 0; top: 0; width: 1840px; height: 1011px; pointer-events: none; }
```
